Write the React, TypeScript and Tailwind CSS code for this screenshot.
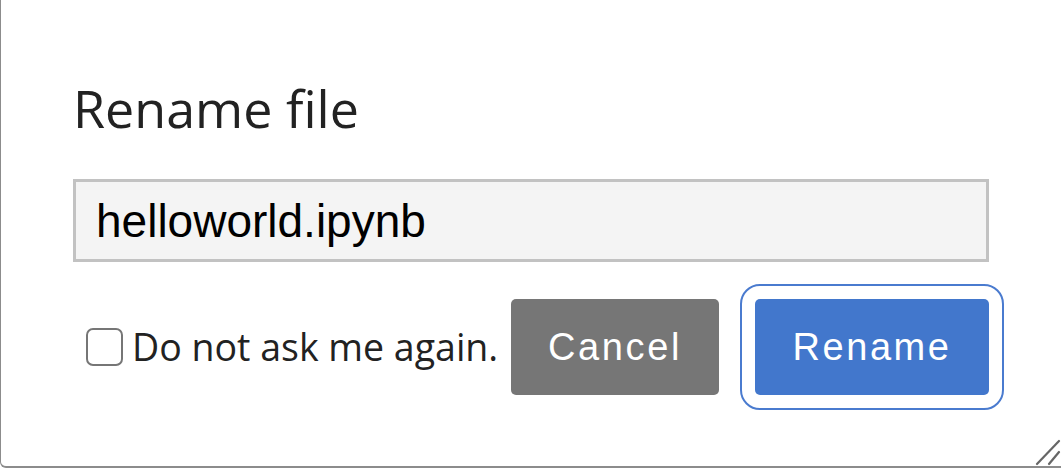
import React, { useState } from 'react';

const RenameDialog: React.FC = () => {
  const [name, setName] = useState('helloworld.ipynb');
  const [dontAsk, setDontAsk] = useState(false);

  return (
    <div className="relative h-[468px] w-full overflow-hidden bg-white border-l border-b-2 border-[#8c8c8c] rounded-bl-[6px]">
      <div className="flex flex-col pl-[72px] pr-[72px] pt-[77px]">
        <h1 className="text-[52px] leading-[62px] text-[#222222] font-['Open_Sans',sans-serif] font-normal">
          Rename file
        </h1>

        <input
          value={name}
          onChange={(e) => setName(e.target.value)}
          className="mt-[40px] h-[83px] w-full border-[3px] border-[#c2c2c2] bg-[#f4f4f4] pl-[20px] text-[46px] text-black font-['Liberation_Sans',Arial,sans-serif] outline-none"
        />

        <div className="mt-[37px] flex items-center">
          <label className="flex items-center pl-[13px] gap-[9px] cursor-pointer">
            <input
              type="checkbox"
              checked={dontAsk}
              onChange={(e) => setDontAsk(e.target.checked)}
              className="appearance-none w-[37px] h-[38px] border-2 border-[#767676] rounded-[7px] bg-white"
            />
            <span className="text-[37.5px] text-[#222222] font-['Open_Sans',sans-serif]">
              Do not ask me again.
            </span>
          </label>

          <div className="ml-auto flex items-center gap-[36px]">
            <button className="w-[208px] h-[96px] rounded-[5px] bg-[#767676] text-white text-[38px] tracking-[2.6px] font-['Liberation_Sans',Arial,sans-serif]">
              Cancel
            </button>
            <button className="w-[234px] h-[96px] rounded-[5px] bg-[#4277cc] text-white text-[38px] tracking-[2.6px] font-['Liberation_Sans',Arial,sans-serif] outline-2 outline-solid outline-[#4a7bcf] outline-offset-[13px]">
              Rename
            </button>
          </div>
        </div>
      </div>

      <svg className="absolute right-0 bottom-0" width="26" height="28" viewBox="0 0 26 28">
        <line x1="2" y1="26" x2="24" y2="3" stroke="#666" strokeWidth="2.2" strokeLinecap="round" />
        <line x1="14" y1="26" x2="24" y2="14" stroke="#666" strokeWidth="2.2" strokeLinecap="round" />
      </svg>
    </div>
  );
};

export default function App() {
  return <RenameDialog />;
}
